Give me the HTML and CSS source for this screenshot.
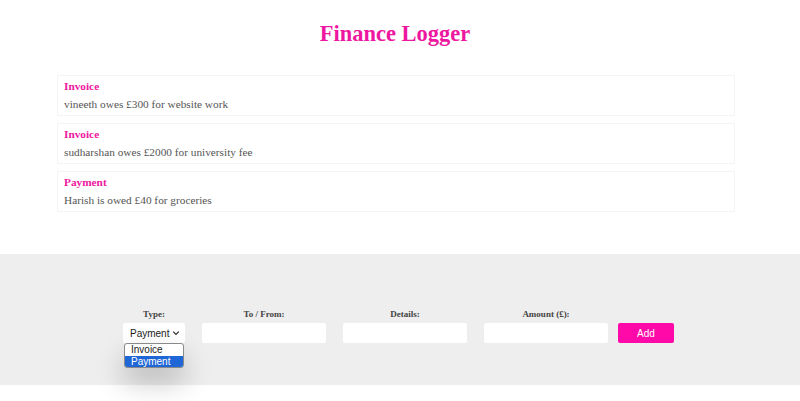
FILE: index.html
```html
<!DOCTYPE html>
<html>
<head>
<meta charset="utf-8">
<link rel="stylesheet" href="styles.css">
</head>
<body>
<header class="top">
  <h1 class="title">Finance Logger</h1>
</header>
<main class="wrapper">
  <ul class="item-list">
    <li class="item">
      <h4 class="item-type">Invoice</h4>
      <p class="item-text">vineeth owes £300 for website work</p>
    </li>
    <li class="item">
      <h4 class="item-type">Invoice</h4>
      <p class="item-text">sudharshan owes £2000 for university fee</p>
    </li>
    <li class="item">
      <h4 class="item-type">Payment</h4>
      <p class="item-text">Harish is owed £40 for groceries</p>
    </li>
  </ul>
</main>
<footer class="form-band">
  <form class="new-item">
    <div class="field field-type">
      <label class="label">Type:</label>
      <div class="select">
        <span>Payment</span>
        <svg class="chev" width="8" height="6" viewBox="0 0 8 6"><path d="M1.2 1.6 L4 4.4 L6.8 1.6" fill="none" stroke="#333" stroke-width="1.3"/></svg>
      </div>
      <div class="dropdown">
        <div class="opt">Invoice</div>
        <div class="opt opt-sel">Payment</div>
      </div>
    </div>
    <div class="field">
      <label class="label">To / From:</label>
      <div class="input"></div>
    </div>
    <div class="field">
      <label class="label">Details:</label>
      <div class="input"></div>
    </div>
    <div class="field">
      <label class="label">Amount (£):</label>
      <div class="input"></div>
    </div>
    <div class="field field-btn">
      <button type="button" class="btn">Add</button>
    </div>
  </form>
</footer>
</body>
</html>
```

FILE: styles.css
```css
* { box-sizing: border-box; }
html, body { margin: 0; padding: 0; background: #fff; }
body { font-family: "Liberation Serif", "Times New Roman", serif; width: 800px; height: 401px; overflow: hidden; }

.top { padding-top: 21px; height: 75px; }
.title {
  margin: 0;
  text-align: center;
  font-size: 22.5px;
  font-weight: bold;
  color: #ee179f;
  line-height: 26px;
  padding-right: 10px;
}

.wrapper { padding-left: 57px; width: 735px; }
.item-list { list-style: none; margin: 0; padding: 0; display: flex; flex-direction: column; gap: 7px; }
.item {
  height: 41px;
  border: 1px solid #f4f4f4;
  padding: 4px 6px 0;
}
.item-type {
  margin: 0;
  font-size: 11.3px;
  line-height: 13px;
  color: #ee179f;
  font-weight: bold;
}
.item-text {
  margin: 4px 0 0;
  font-size: 11.3px;
  line-height: 14px;
  color: #555;
}

.form-band {
  margin-top: 42px;
  height: 131px;
  background: #eeeeee;
  padding-top: 55px;
}
.new-item { display: flex; align-items: flex-end; padding-left: 123px; gap: 17px; }
.field { display: flex; flex-direction: column; align-items: center; position: relative; }
.label {
  font-size: 9px;
  font-weight: bold;
  color: #444;
  line-height: 10px;
  margin-bottom: 4px;
}
.select {
  width: 62px;
  height: 20px;
  background: #fff;
  border-radius: 2px;
  display: flex;
  align-items: center;
  justify-content: space-between;
  padding: 0 5px 0 7px;
  font-family: "Liberation Sans", Arial, sans-serif;
  font-size: 10px;
  color: #222;
}
.chev { display: block; }
.input {
  width: 124px;
  height: 20px;
  background: #fff;
  border-radius: 2px;
}
.field-btn { margin-left: -7px; }
.btn {
  width: 56px;
  height: 20px;
  border: none;
  border-radius: 2px;
  background: #ff0aa8;
  color: #fff;
  font-family: "Liberation Sans", Arial, sans-serif;
  font-size: 10px;
  padding: 0;
}
.dropdown {
  position: absolute;
  top: 34px;
  left: 1px;
  width: 60px;
  border: 1px solid #8a8a8a;
  border-radius: 3px;
  background: #fff;
  overflow: hidden;
  box-shadow: 0 14px 28px rgba(0,0,0,0.24);
  font-family: "Liberation Sans", Arial, sans-serif;
  font-size: 10px;
  line-height: 11.5px;
}
.opt { padding: 0 0 0 6px; color: #222; height: 11.5px; }
.opt-sel { background: #1f66d6; color: #fff; }
```
